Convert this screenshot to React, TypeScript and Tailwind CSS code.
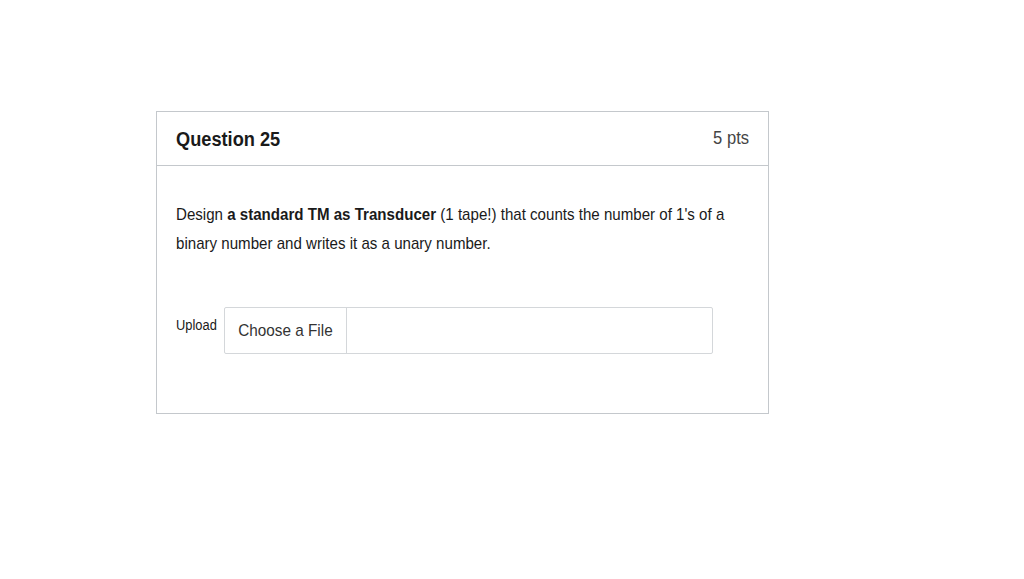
export default function App() {
  return (
    <div className="min-h-[579px] w-[1024px] bg-white pt-[111px] pl-[156px] font-['Liberation_Sans',Arial,sans-serif] text-[#1a1a1a]">
      <div className="w-[613px] h-[303px] border border-[#c4c8cc]">
        <div className="flex h-[54px] items-center justify-between border-b border-[#c4c8cc] px-[19px]">
          <h2 className="origin-left scale-x-[0.91] text-[20px] font-bold">Question 25</h2>
          <span className="origin-right scale-x-[0.92] text-[18px] text-[#444]">5 pts</span>
        </div>
        <div className="px-[19px] pt-[34px]">
          <p className="w-[625px] origin-left scale-x-[0.888] text-[17px] leading-[29px]">
            Design <b>a standard TM as Transducer</b> (1 tape!) that counts the
            number of 1's of a binary number and writes it as a unary number.
          </p>
          <div className="mt-[49px] flex items-start">
            <span className="w-[48px] shrink-0 pt-[8px] text-[14px]">
              <span className="inline-block origin-left scale-x-[0.92]">Upload</span>
            </span>
            <div className="flex h-[47px] w-[489px] rounded-[2px] border border-[#d4d7da]">
              <button className="flex h-full w-[122px] items-center justify-center border-r border-[#d4d7da] text-[17px] text-[#333]">
                <span className="inline-block scale-x-[0.9]">Choose a File</span>
              </button>
            </div>
          </div>
        </div>
      </div>
    </div>
  );
}
